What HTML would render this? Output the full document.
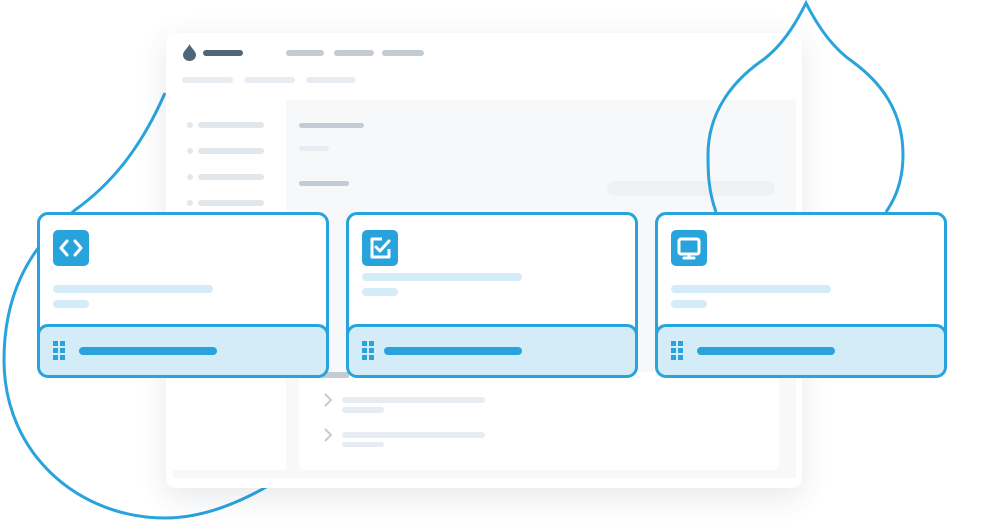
<!DOCTYPE html>
<html><head><style>
body{margin:0;width:986px;height:522px;background:#fff;position:relative;overflow:hidden;font-family:"Liberation Sans",sans-serif}
.a{position:absolute}
.b{position:absolute;border-radius:4px}
.card{position:absolute;top:212px;width:286px;height:160px;border:3px solid #29a3dc;border-radius:11px;background:#fff;overflow:hidden}
.foot{position:absolute;left:-3px;right:-3px;bottom:-3px;height:48px;border:3px solid #29a3dc;border-radius:11px;background:#d4ebf8}
.ic{position:absolute;left:13px;top:15px;width:36px;height:36px;background:#29a3dc;border-radius:5px}
</style></head><body>
<svg class="a" style="left:0;top:0" width="986" height="522">
<path d="M165,93 C140,150 110,185 75,210 C25,250 4,300 4,360 C4,455 80,518 165,518 C200,518 235,505 268,486" fill="none" stroke="#29a3dc" stroke-width="3"/>
</svg>
<div class="a" style="left:166px;top:33px;width:636px;height:455px;background:#fff;border-radius:10px;box-shadow:0 8px 30px rgba(40,60,90,0.12)"></div>
<div class="a" style="left:286px;top:100px;width:510px;height:378px;background:#f7f8fa"></div>
<div class="a" style="left:173px;top:470px;width:113px;height:8px;background:#f7f8fa"></div>
<div class="a" style="left:299px;top:372px;width:480px;height:98px;background:#fff;border-radius:6px"></div>
<svg class="a" style="left:182px;top:43px" width="16" height="18"><path d="M7.5,1 C9,5 14,8 14,12 A6.5,6 0 0 1 1,12 C1,8 6,5 7.5,1Z" fill="#4f6579"/></svg>
<div class="b" style="left:203px;top:50px;width:40px;height:6px;background:#4f6579"></div>
<div class="b" style="left:286px;top:50px;width:38px;height:6px;background:#c3ccd4"></div>
<div class="b" style="left:334px;top:50px;width:40px;height:6px;background:#c3ccd4"></div>
<div class="b" style="left:382px;top:50px;width:42px;height:6px;background:#c3ccd4"></div>
<div class="b" style="left:182px;top:77px;width:51px;height:6px;background:#e6ecf1"></div>
<div class="b" style="left:244px;top:77px;width:51px;height:6px;background:#e6ecf1"></div>
<div class="b" style="left:306px;top:77px;width:50px;height:6px;background:#e6ecf1"></div>
<div class="b" style="left:187px;top:122px;width:6px;height:6px;background:#e2e7ec"></div><div class="b" style="left:198px;top:122px;width:66px;height:6px;background:#e2e7ec"></div>
<div class="b" style="left:187px;top:148px;width:6px;height:6px;background:#e2e7ec"></div><div class="b" style="left:198px;top:148px;width:66px;height:6px;background:#e2e7ec"></div>
<div class="b" style="left:187px;top:174px;width:6px;height:6px;background:#e2e7ec"></div><div class="b" style="left:198px;top:174px;width:66px;height:6px;background:#e2e7ec"></div>
<div class="b" style="left:187px;top:200px;width:6px;height:6px;background:#e2e7ec"></div><div class="b" style="left:198px;top:200px;width:66px;height:6px;background:#e2e7ec"></div>
<div class="b" style="left:299px;top:123px;width:65px;height:5px;background:#c3ccd4"></div>
<div class="b" style="left:299px;top:146px;width:30px;height:5px;background:#e6ecf1"></div>
<div class="b" style="left:299px;top:181px;width:50px;height:5px;background:#c3ccd4"></div>
<div class="a" style="left:607px;top:181px;width:168px;height:15px;border-radius:8px;background:#eff2f5"></div>
<svg class="a" style="left:320px;top:390px" width="20" height="60"><path d="M5,4 L11,10 L5,16 M5,39 L11,45 L5,51" fill="none" stroke="#c3ccd4" stroke-width="2"/></svg>
<div class="b" style="left:342px;top:397px;width:143px;height:6px;background:#e6ecf1"></div>
<div class="b" style="left:342px;top:407px;width:42px;height:6px;background:#e6ecf1"></div>
<div class="b" style="left:342px;top:432px;width:143px;height:6px;background:#e6ecf1"></div>
<div class="b" style="left:342px;top:442px;width:42px;height:5px;background:#e6ecf1"></div>
<div class="a" style="left:299px;top:372px;width:50px;height:6px;background:#c3ccd4"></div>
<svg class="a" style="left:0;top:0" width="986" height="522">
<path d="M716,212 C708,190 708,170 708,155 C708,110 735,80 760,62 C785,45 800,15 806,3 C812,15 828,45 853,62 C880,82 903,110 903,155 C903,175 898,195 886,212" fill="none" stroke="#29a3dc" stroke-width="3"/>
</svg>
<div class="card" style="left:37px">
<div class="ic"><svg width="36" height="36"><path d="M14,11 L8,18 L14,25 M22,11 L28,18 L22,25" fill="none" stroke="#fff" stroke-width="3" stroke-linecap="round" stroke-linejoin="round"/></svg></div>
<div class="b" style="left:13px;top:70px;width:160px;height:8px;background:#d4ebf8"></div>
<div class="b" style="left:13px;top:85px;width:36px;height:8px;background:#d4ebf8"></div>
<div class="foot"><svg class="a" style="left:13px;top:14px" width="14" height="20"><g fill="#29a3dc"><rect x="0" y="0" width="5" height="5"/><rect x="7" y="0" width="5" height="5"/><rect x="0" y="7" width="5" height="5"/><rect x="7" y="7" width="5" height="5"/><rect x="0" y="14" width="5" height="5"/><rect x="7" y="14" width="5" height="5"/></g></svg><div class="b" style="left:39px;top:20px;width:138px;height:8px;background:#29a3dc"></div></div>
</div>
<div class="card" style="left:346px">
<div class="ic"><svg width="36" height="36"><path d="M20,9 L10,9 L10,27 L27,27 L27,19" fill="none" stroke="#fff" stroke-width="3" stroke-linejoin="round"/><path d="M14,17 L18,21 L27,11" fill="none" stroke="#fff" stroke-width="3" stroke-linecap="round" stroke-linejoin="round"/></svg></div>
<div class="b" style="left:13px;top:58px;width:160px;height:8px;background:#d4ebf8"></div>
<div class="b" style="left:13px;top:73px;width:36px;height:8px;background:#d4ebf8"></div>
<div class="foot"><svg class="a" style="left:13px;top:14px" width="14" height="20"><g fill="#29a3dc"><rect x="0" y="0" width="5" height="5"/><rect x="7" y="0" width="5" height="5"/><rect x="0" y="7" width="5" height="5"/><rect x="7" y="7" width="5" height="5"/><rect x="0" y="14" width="5" height="5"/><rect x="7" y="14" width="5" height="5"/></g></svg><div class="b" style="left:35px;top:20px;width:138px;height:8px;background:#29a3dc"></div></div>
</div>
<div class="card" style="left:655px">
<div class="ic"><svg width="36" height="36"><rect x="8" y="9" width="20" height="15" rx="2" fill="none" stroke="#fff" stroke-width="3"/><path d="M18,24 L18,28 M13,28 L23,28" stroke="#fff" stroke-width="3" stroke-linecap="round"/></svg></div>
<div class="b" style="left:13px;top:70px;width:160px;height:8px;background:#d4ebf8"></div>
<div class="b" style="left:13px;top:85px;width:36px;height:8px;background:#d4ebf8"></div>
<div class="foot"><svg class="a" style="left:13px;top:14px" width="14" height="20"><g fill="#29a3dc"><rect x="0" y="0" width="5" height="5"/><rect x="7" y="0" width="5" height="5"/><rect x="0" y="7" width="5" height="5"/><rect x="7" y="7" width="5" height="5"/><rect x="0" y="14" width="5" height="5"/><rect x="7" y="14" width="5" height="5"/></g></svg><div class="b" style="left:39px;top:20px;width:138px;height:8px;background:#29a3dc"></div></div>
</div>
</body></html>
